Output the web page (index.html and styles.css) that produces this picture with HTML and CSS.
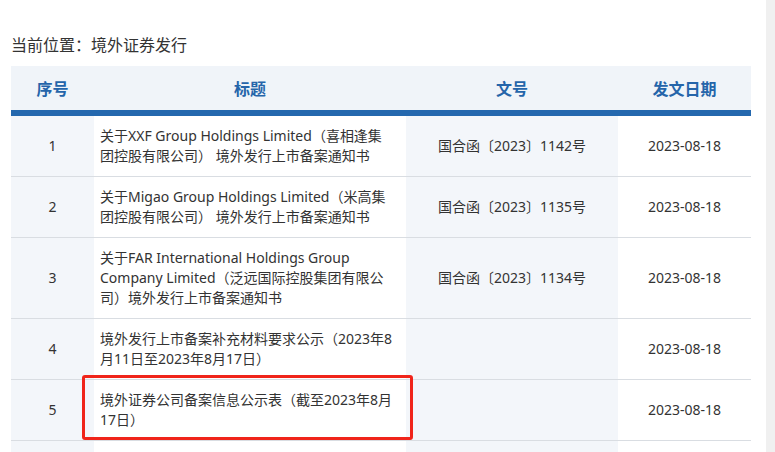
FILE: index.html
```html
<!DOCTYPE html>
<html lang="zh-CN">
<head>
<meta charset="utf-8">
<title>境外证券发行</title>
<link rel="stylesheet" href="styles.css">
</head>
<body>
<div class="main">
  <div class="crumb">当前位置：境外证券发行</div>
  <table class="list">
    <colgroup>
      <col class="c-no"><col class="c-title"><col class="c-doc"><col class="c-date">
    </colgroup>
    <thead>
      <tr><th>序号</th><th>标题</th><th>文号</th><th>发文日期</th></tr>
    </thead>
    <tbody>
      <tr>
        <td class="no">1</td>
        <td class="title">关于XXF Group Holdings Limited（喜相逢集团控股有限公司） 境外发行上市备案通知书</td>
        <td class="doc">国合函〔2023〕1142号</td>
        <td class="date">2023-08-18</td>
      </tr>
      <tr>
        <td class="no">2</td>
        <td class="title">关于Migao Group Holdings Limited（米高集团控股有限公司） 境外发行上市备案通知书</td>
        <td class="doc">国合函〔2023〕1135号</td>
        <td class="date">2023-08-18</td>
      </tr>
      <tr>
        <td class="no">3</td>
        <td class="title">关于FAR International Holdings Group Company Limited（泛远国际控股集团有限公司）境外发行上市备案通知书</td>
        <td class="doc">国合函〔2023〕1134号</td>
        <td class="date">2023-08-18</td>
      </tr>
      <tr>
        <td class="no">4</td>
        <td class="title">境外发行上市备案补充材料要求公示（2023年8月11日至2023年8月17日）</td>
        <td class="doc"></td>
        <td class="date">2023-08-18</td>
      </tr>
      <tr>
        <td class="no">5</td>
        <td class="title marked"><span class="mark"></span>境外证券公司备案信息公示表（截至2023年8月17日）</td>
        <td class="doc"></td>
        <td class="date">2023-08-18</td>
      </tr>
      <tr class="tail">
        <td class="no"></td>
        <td class="title"></td>
        <td class="doc"></td>
        <td class="date"></td>
      </tr>
    </tbody>
  </table>
</div>
<div class="scrollbar"></div>
</body>
</html>
```
FILE: styles.css
```css
html, body {
  margin: 0;
  padding: 0;
}
body {
  display: flex;
  height: 452px;
  overflow: hidden;
  background: #fff;
  font-family: "Noto Sans", "Noto Sans CJK SC", sans-serif;
  color: #333;
}
.main {
  flex: 1;
  padding-left: 11px;
}
.scrollbar {
  width: 9px;
  background: #f0f0f0;
}
.crumb {
  margin-top: 34px;
  height: 32px;
  font-size: 16px;
  line-height: 22px;
  color: #333;
}
.list {
  width: 740px;
  border-collapse: collapse;
  table-layout: fixed;
}
.c-no { width: 83px; }
.c-title { width: 312px; }
.c-doc { width: 212px; }
.c-date { width: 133px; }
.list th {
  height: 44px;
  padding: 0;
  background: #f0f4f9;
  border-bottom: 6px solid #2468ae;
  color: #2565aa;
  font-size: 16px;
  font-weight: bold;
  text-align: center;
}
.list td {
  padding: 10px 6px;
  height: 40px;
  font-size: 14px;
  line-height: 20px;
  vertical-align: middle;
  border-bottom: 1px solid #d9dde2;
  color: #333;
}
.list td.no,
.list td.doc {
  background: #f3f6fa;
  text-align: center;
}
.list td.date {
  text-align: center;
}
.list td.title {
  text-align: left;
  padding-right: 12px;
}
.marked {
  position: relative;
}
.mark {
  position: absolute;
  left: -12px;
  top: -5px;
  width: 325px;
  height: 59px;
  border: 3px solid #f0241a;
  border-radius: 3px;
}
```
